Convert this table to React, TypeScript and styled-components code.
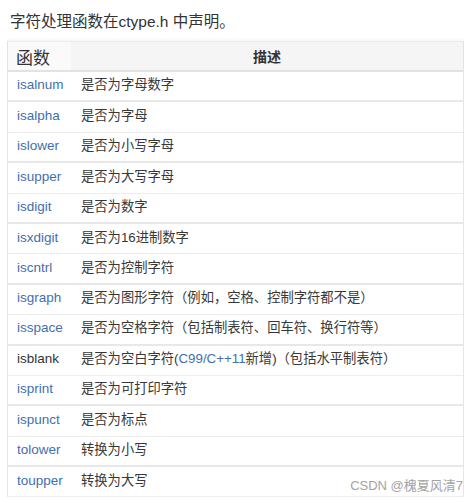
import React from "react";
import styled, { createGlobalStyle } from "styled-components";

const Global = createGlobalStyle`
  html, body { margin: 0; padding: 0; background: #fff; }
  body { font-family: "Liberation Sans", "Noto Sans CJK SC", sans-serif; color: #333; }
`;

const Page = styled.div`
  position: relative;
  width: 474px;
  height: 500px;
  overflow: hidden;
  padding: 12px 0 0 0;
  box-sizing: border-box;
`;

const Title = styled.p`
  margin: 0 0 0 10px;
  font-size: 15.5px;
  line-height: 20px;
  color: #333;
`;

const Table = styled.div`
  margin: 9px 0 0 7px;
  width: 457px;
  border-left: 1px solid #e6e6e6;
  border-right: 1px solid #e6e6e6;
  box-sizing: border-box;
`;

const HeaderRow = styled.div`
  display: grid;
  grid-template-columns: 63px 1fr;
  height: 28px;
  background: #f5f5f5;
  border-top: 1px solid #ececec;
  border-bottom: 2px solid #e2e2e2;
  box-shadow: 0 -2px 3px rgba(0,0,0,0.04);
`;

const HeadName = styled.div`
  display: flex;
  align-items: center;
  padding-left: 8px;
  font-size: 17px;
  background: #fafafa;
  color: #333;
  overflow: hidden;
  white-space: nowrap;
`;

const HeadDesc = styled.div`
  display: flex;
  align-items: center;
  justify-content: center;
  font-size: 14px;
  font-weight: bold;
  color: #333;
`;

const Row = styled.div<{ $thick?: boolean }>`
  display: grid;
  grid-template-columns: 63px 1fr;
  height: 30.4px;
  box-sizing: border-box;
  border-bottom: ${(p) => (p.$thick ? "2px solid #e8e8e8" : "1px solid #ededed")};
  font-size: 13.3px;
  line-height: 16px;
  padding-bottom: 2px;
`;

const Name = styled.div<{ $plain?: boolean }>`
  display: flex;
  align-items: center;
  padding-left: 9px;
  font-size: 13.5px;
  color: ${(p) => (p.$plain ? "#333" : "#3f6fae")};
`;

const Desc = styled.div`
  display: flex;
  align-items: center;
  padding-left: 10px;
  color: #383838;
  white-space: nowrap;
`;

const Link = styled.span`
  color: #3f6fae;
`;

const Watermark = styled.div`
  position: absolute;
  right: 11px;
  top: 475px;
  font-size: 13px;
  color: #a3a3a3;
  background: rgba(255,255,255,0.6);
`;

const rows: { name: string; desc: React.ReactNode; plain?: boolean }[] = [
  { name: "isalnum", desc: "是否为字母数字" },
  { name: "isalpha", desc: "是否为字母" },
  { name: "islower", desc: "是否为小写字母" },
  { name: "isupper", desc: "是否为大写字母" },
  { name: "isdigit", desc: "是否为数字" },
  { name: "isxdigit", desc: "是否为16进制数字" },
  { name: "iscntrl", desc: "是否为控制字符" },
  { name: "isgraph", desc: "是否为图形字符（例如，空格、控制字符都不是）" },
  { name: "isspace", desc: "是否为空格字符（包括制表符、回车符、换行符等）" },
  {
    name: "isblank",
    plain: true,
    desc: (
      <>
        是否为空白字符(<Link>C99/C++11</Link>新增)（包括水平制表符）
      </>
    ),
  },
  { name: "isprint", desc: "是否为可打印字符" },
  { name: "ispunct", desc: "是否为标点" },
  { name: "tolower", desc: "转换为小写" },
  { name: "toupper", desc: "转换为大写" },
];

export default function App() {
  return (
    <Page>
      <Global />
      <Title>字符处理函数在ctype.h 中声明。</Title>
      <Table>
        <HeaderRow>
          <HeadName>函数</HeadName>
          <HeadDesc>描述</HeadDesc>
        </HeaderRow>
        {rows.map((r, i) => (
          <Row key={r.name} $thick={i % 2 === 0}>
            <Name $plain={r.plain}>{r.name}</Name>
            <Desc>{r.desc}</Desc>
          </Row>
        ))}
      </Table>
      <Watermark>CSDN @槐夏风清7</Watermark>
    </Page>
  );
}
